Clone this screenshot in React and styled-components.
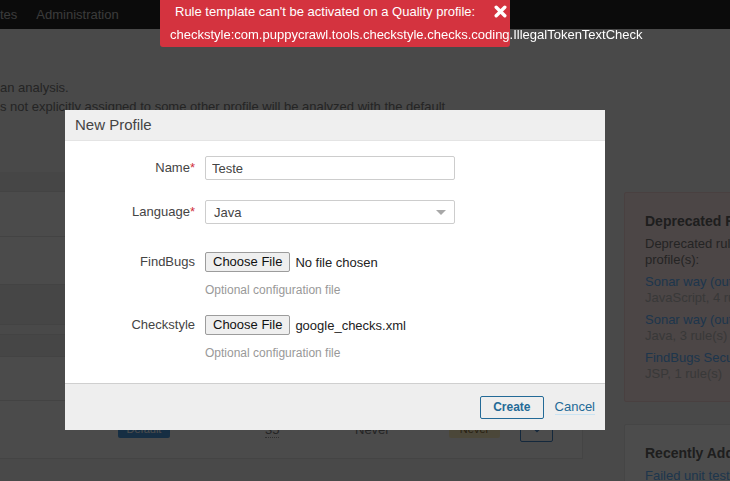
import React from 'react';
import styled, { createGlobalStyle } from 'styled-components';

const GlobalStyle = createGlobalStyle`
  * { box-sizing: border-box; }
  html, body { margin: 0; padding: 0; }
  body {
    width: 730px;
    height: 481px;
    overflow: hidden;
    background: #f3f3f3;
    font-family: "Liberation Sans", Arial, Helvetica, sans-serif;
    font-size: 13px;
    color: #7a7a7a;
  }
`;

/* ---------- page behind the modal ---------- */

const Navbar = styled.nav`
  height: 29px;
  background: #252525;
  display: flex;
  align-items: center;
  gap: 19px;
`;

const NavItem = styled.a`
  color: #c4c4c4;
  line-height: 29px;
  text-decoration: none;
`;

const Main = styled.main`
  display: flex;
  align-items: flex-start;
  gap: 41px;
`;

const LeftCol = styled.div`
  flex: none;
  width: 583px;
  padding-top: 49px;
`;

const Description = styled.p`
  margin: 0;
  line-height: 19px;
  white-space: nowrap;
`;

const ListCard = styled.div`
  margin-top: 56px;
  background: #fff;
  border-right: 1px solid #e4e4e4;
  border-bottom: 1px solid #e4e4e4;
`;

const TableRow = styled.div`
  height: ${p => p.$h}px;
  background: ${p => (p.$tone === 'shade' ? '#ececec' : p.$tone === 'mid' ? '#f6f6f6' : '#fbfbfb')};
  border-bottom: 1px solid #e2e2e2;
`;

const ProfileRow = styled.div`
  height: 57px;
  display: grid;
  grid-template-columns: 147px 90px 94px 71px 33px;
  align-items: center;
  padding-left: 118px;
  background: #fbfbfb;
`;

const Badge = styled.span`
  display: inline-block;
  width: ${p => p.$w}px;
  height: 17px;
  line-height: 17px;
  text-align: center;
  font-size: 11px;
  border-radius: 2px;
  background: ${p => (p.$kind === 'warn' ? '#fbeec0' : '#4a9ae0')};
  color: ${p => (p.$kind === 'warn' ? '#8a6d3b' : '#ffffff')};
`;

const Count = styled.span`
  justify-self: start;
  border-bottom: 1px dotted #9a9a9a;
  line-height: 15px;
`;

const ActionButton = styled.span`
  display: flex;
  align-items: center;
  justify-content: center;
  width: 33px;
  height: 25px;
  border: 1px solid #4385c8;
  border-radius: 2px;
  background: #fff;
  color: #4385c8;
`;

const RightCol = styled.aside`
  flex: none;
  width: 370px;
  padding-top: 163px;
`;

const SideCard = styled.section`
  padding: 19px 20px 19px;
  margin-bottom: 22px;
  background: ${p => (p.$tone === 'danger' ? '#ffe9e9' : '#ffffff')};
  border: 1px solid ${p => (p.$tone === 'danger' ? '#f3d6d6' : '#e6e6e6')};
  border-radius: 2px;
`;

const SideTitle = styled.h3`
  margin: 0 0 6px;
  font-size: 14px;
  line-height: 18px;
  color: #666;
`;

const SideText = styled.p`
  margin: 0;
  line-height: 16px;
`;

const RuleItem = styled.div`
  margin-top: 6px;
`;

const RuleLink = styled.a`
  display: block;
  line-height: 16px;
  color: #64b4ff;
  text-decoration: none;
`;

const RuleNote = styled.div`
  line-height: 16px;
  color: #bdbdbd;
`;

/* ---------- modal ---------- */

const Backdrop = styled.div`
  position: fixed;
  inset: 0;
  background: rgba(0, 0, 0, 0.7);
`;

const Modal = styled.div`
  position: fixed;
  top: 110px;
  left: 65px;
  width: 540px;
  background: #fff;
  color: #444;
`;

const ModalHeader = styled.header`
  height: 31px;
  padding: 0 10px;
  background: #efefef;
  border-bottom: 1px solid #e4e4e4;
`;

const ModalTitle = styled.h2`
  margin: 0;
  font-size: 15px;
  font-weight: normal;
  line-height: 30px;
  color: #444;
`;

const ModalBody = styled.div`
  height: 242px;
  padding-top: 15px;
`;

const Field = styled.div`
  display: grid;
  grid-template-columns: 130px 1fr;
  grid-template-rows: 24px;
  column-gap: 10px;
  row-gap: 8px;
  align-items: center;
  margin-top: ${p => p.$top || 0}px;
`;

const Label = styled.label`
  text-align: right;
  line-height: 16px;
  color: #444;
`;

const Required = styled.em`
  font-style: normal;
  color: #d02f3a;
`;

const TextInput = styled.input`
  width: 250px;
  height: 24px;
  padding: 0 6px;
  border: 1px solid #cdcdcd;
  border-radius: 2px;
  font: inherit;
  color: #444;
  outline: none;
`;

const Select = styled.div`
  width: 250px;
  height: 24px;
  display: flex;
  align-items: center;
  justify-content: space-between;
  padding: 0 8px 0 8px;
  border: 1px solid #cdcdcd;
  border-radius: 2px;
  color: #444;
`;

const Caret = styled.span`
  width: 0;
  height: 0;
  border-left: 5px solid transparent;
  border-right: 5px solid transparent;
  border-top: 5px solid #a8a8a8;
`;

const FileControl = styled.div`
  display: flex;
  align-items: center;
`;

const FileButton = styled.span`
  height: 20px;
  line-height: 18px;
  padding: 0 7px;
  background: #efefef;
  border: 1px solid #9c9c9c;
  border-radius: 2px;
  color: #111;
`;

const FileName = styled.span`
  margin-left: 5px;
  color: #222;
`;

const Hint = styled.div`
  grid-column: 2;
  font-size: 12px;
  line-height: 16px;
  color: #999;
`;

const ModalFooter = styled.footer`
  height: 47px;
  display: flex;
  align-items: center;
  justify-content: flex-end;
  gap: 11px;
  padding: 0 10px;
  background: #eeeeee;
  border-top: 1px solid #cfcfcf;
`;

const CreateButton = styled.button`
  height: 23px;
  padding: 0 12px;
  background: transparent;
  border: 1px solid #236a97;
  border-radius: 2px;
  font-family: inherit;
  font-size: 12px;
  font-weight: bold;
  color: #236a97;
`;

const CancelLink = styled.a`
  display: inline-block;
  line-height: 15px;
  color: #236a97;
  border-bottom: 1px solid #cae3f2;
  text-decoration: none;
`;

/* ---------- error toast ---------- */

const Toast = styled.div`
  position: fixed;
  top: 0;
  left: 160px;
  width: 350px;
  height: 47px;
  background: #d4333f;
  color: #fff;
  border-radius: 0 0 3px 3px;
  white-space: nowrap;
`;

const ToastTitle = styled.div`
  height: 23px;
  display: flex;
  align-items: center;
  justify-content: space-between;
  padding: 0 3px 0 15px;
`;

const ToastDetail = styled.div`
  padding-left: 10px;
  line-height: 23px;
`;

const CloseIcon = () => (
  <svg width="13" height="13" viewBox="0 0 13 13">
    <path d="M2.2 2.2 L10.8 10.8 M10.8 2.2 L2.2 10.8" stroke="#fff" strokeWidth="3.4" strokeLinecap="round" />
  </svg>
);

const SmallCaret = () => (
  <svg width="8" height="8" viewBox="0 0 8 8">
    <path d="M1 2.5 L4 5.5 L7 2.5" stroke="currentColor" strokeWidth="1.5" fill="none" />
  </svg>
);

const rules = [
  { name: 'Sonar way (outdated copy)', note: 'JavaScript, 4 rule(s)' },
  { name: 'Sonar way (outdated copy)', note: 'Java, 3 rule(s)' },
  { name: 'FindBugs Security JSP', note: 'JSP, 1 rule(s)' },
];

export default function App() {
  return (
    <>
      <GlobalStyle />
      <Navbar>
        <NavItem>tes</NavItem>
        <NavItem>Administration</NavItem>
      </Navbar>
      <Main>
        <LeftCol>
          <Description>an analysis.</Description>
          <Description>s not explicitly assigned to some other profile will be analyzed with the default</Description>
          <ListCard>
            <TableRow $h={20} $tone="shade" />
            <TableRow $h={45} />
            <TableRow $h={48} />
            <TableRow $h={40} $tone="shade" />
            <TableRow $h={10} $tone="mid" />
            <TableRow $h={22} $tone="shade" />
            <TableRow $h={44} />
            <ProfileRow>
              <span><Badge $w={52}>Default</Badge></span>
              <Count>35</Count>
              <span>Never</span>
              <span><Badge $w={51} $kind="warn">Never</Badge></span>
              <ActionButton><SmallCaret /></ActionButton>
            </ProfileRow>
          </ListCard>
        </LeftCol>
        <RightCol>
          <SideCard $tone="danger">
            <SideTitle>Deprecated Rules</SideTitle>
            <SideText>Deprecated rules are still activated on the following profile(s):</SideText>
            {rules.map((r, i) => (
              <RuleItem key={i}>
                <RuleLink>{r.name}</RuleLink>
                <RuleNote>{r.note}</RuleNote>
              </RuleItem>
            ))}
          </SideCard>
          <SideCard>
            <SideTitle>Recently Added Rules</SideTitle>
            <RuleLink>Failed unit tests should be fixed</RuleLink>
          </SideCard>
        </RightCol>
      </Main>

      <Backdrop />

      <Modal>
        <ModalHeader>
          <ModalTitle>New Profile</ModalTitle>
        </ModalHeader>
        <ModalBody>
          <Field>
            <Label>Name<Required>*</Required></Label>
            <TextInput defaultValue="Teste" />
          </Field>
          <Field $top={20}>
            <Label>Language<Required>*</Required></Label>
            <Select>
              <span>Java</span>
              <Caret />
            </Select>
          </Field>
          <Field $top={26}>
            <Label>FindBugs</Label>
            <FileControl>
              <FileButton>Choose File</FileButton>
              <FileName>No file chosen</FileName>
            </FileControl>
            <Hint>Optional configuration file</Hint>
          </Field>
          <Field $top={15}>
            <Label>Checkstyle</Label>
            <FileControl>
              <FileButton>Choose File</FileButton>
              <FileName>google_checks.xml</FileName>
            </FileControl>
            <Hint>Optional configuration file</Hint>
          </Field>
        </ModalBody>
        <ModalFooter>
          <CreateButton>Create</CreateButton>
          <CancelLink>Cancel</CancelLink>
        </ModalFooter>
      </Modal>

      <Toast>
        <ToastTitle>
          <span>Rule template can't be activated on a Quality profile:</span>
          <CloseIcon />
        </ToastTitle>
        <ToastDetail>checkstyle:com.puppycrawl.tools.checkstyle.checks.coding.IllegalTokenTextCheck</ToastDetail>
      </Toast>
    </>
  );
}
